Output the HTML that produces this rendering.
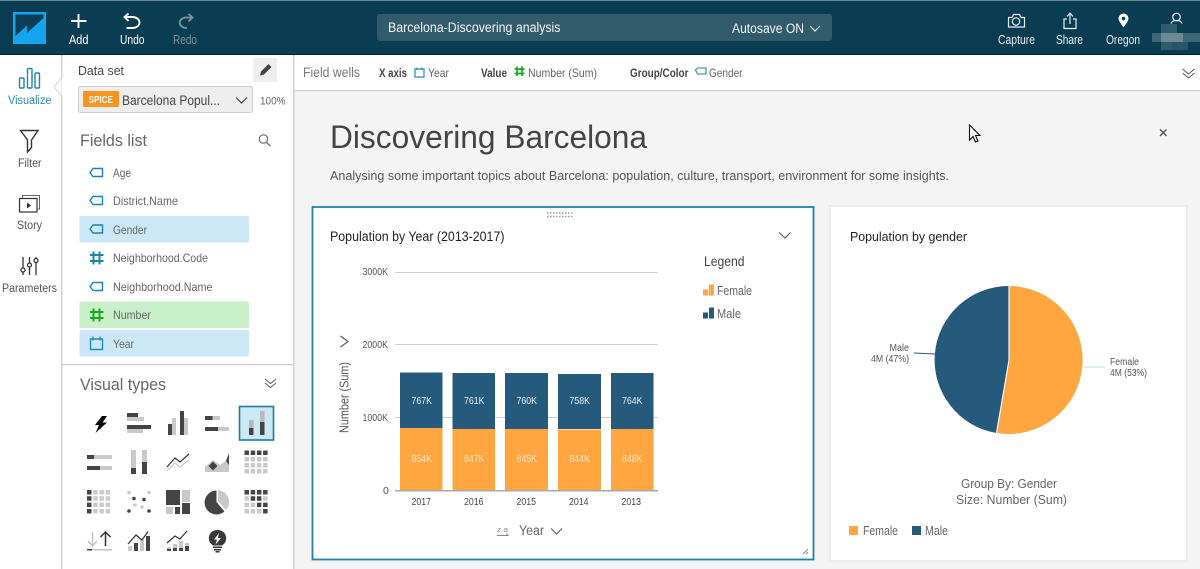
<!DOCTYPE html>
<html><head><meta charset="utf-8"><title>Barcelona-Discovering analysis</title>
<style>
html,body{margin:0;padding:0;width:1200px;height:569px;overflow:hidden;background:#f4f4f4}
svg{display:block;filter:blur(.3px)}
text{font-family:"Liberation Sans",sans-serif}
</style></head><body>
<svg width="1200" height="569" viewBox="0 0 1200 569" xmlns="http://www.w3.org/2000/svg">
<rect width="1200" height="569" fill="#f4f4f4"/>
<!-- top bar -->
<rect width="1200" height="54" fill="#0a3d51"/>
<rect width="1200" height="1" fill="#6d8a96"/>
<rect y="54" width="1200" height="1" fill="#04222e"/>
<rect x="13" y="12" width="33" height="32" fill="#15a5ee"/>
<rect x="15.500" y="14.500" width="28" height="27" fill="#0b3f57"/>
<path d="M15.500 36L27 25.500V33L43.500 18V41.500H15.500Z" fill="#15a5ee"/>
<g stroke="#fff" stroke-width="1.900" fill="none">
<path d="M78.500 14V28M71 21H86.500"/>
<path d="M128.500 13.500L124.500 17L128.500 21M125 17H132.500A7 5.500 0 0 1 132.500 28H126.500"/>
</g>
<path d="M188.500 14L192.500 17.500L188.500 21.500M192 17.500H185A7.500 5.500 0 0 0 185 28H187" stroke="#7e95a0" stroke-width="1.800" fill="none"/>
<g fill="#fff" font-size="12.500">
<text x="69" y="44" textLength="19.500" lengthAdjust="spacingAndGlyphs">Add</text>
<text x="120" y="44" textLength="24.500" lengthAdjust="spacingAndGlyphs">Undo</text>
<text x="998" y="44" textLength="37" lengthAdjust="spacingAndGlyphs" fill="#e6eef1">Capture</text>
<text x="1056" y="44" textLength="27" lengthAdjust="spacingAndGlyphs" fill="#e6eef1">Share</text>
<text x="1106" y="44" textLength="34" lengthAdjust="spacingAndGlyphs" fill="#e6eef1">Oregon</text>
</g>
<text x="173" y="44" font-size="12.500" fill="#7e95a0" textLength="24" lengthAdjust="spacingAndGlyphs">Redo</text>
<rect x="377" y="14" width="455" height="27" rx="3" fill="#315b6b"/>
<text x="388" y="32" font-size="13.500" fill="#f2f6f7" textLength="172.500" lengthAdjust="spacingAndGlyphs">Barcelona-Discovering analysis</text>
<text x="732" y="33" font-size="13.500" fill="#f2f6f7" textLength="72" lengthAdjust="spacingAndGlyphs">Autosave ON</text>
<path d="M810 26L815 31L820 26" stroke="#f2f6f7" stroke-width="1.100" fill="none"/>
<!-- top right icons -->
<g stroke="#e6eef1" stroke-width="1.200" fill="none">
<path d="M1008.500 17.500H1012L1013.500 14.500H1019.500L1021 17.500H1024.500V27H1008.500Z"/>
<circle cx="1016" cy="21.500" r="3.700"/>
<path d="M1067 19H1064V28.500H1076V19H1073M1070 24V13.500M1067 16.500L1070 13L1073 16.500"/>
<circle cx="1176.500" cy="17" r="3.800"/>
<path d="M1171 23.500C1172 20.800 1174 20.500 1176.500 20.500C1179 20.500 1181 20.800 1182 23.500"/>
</g>
<path d="M1123.500 27.500C1120.500 23 1118.500 20.500 1118.500 18.500A5 5 0 0 1 1128.500 18.500C1128.500 20.500 1126.500 23 1123.500 27.500Z" fill="#fff"/>
<circle cx="1123.500" cy="18.500" r="1.800" fill="#0a3d51"/>
<!-- blurred user -->
<rect x="1161" y="24" width="16" height="26" fill="#2f5b6c"/>
<rect x="1152" y="33" width="48" height="9" fill="#3c6676"/>
<rect x="1161" y="33" width="22" height="9" fill="#6a8a97"/>
<rect x="1172" y="42" width="16" height="8" fill="#2a5566"/>

<!-- left rail -->
<rect x="0" y="55" width="61" height="514" fill="#fff"/>
<rect x="61" y="55" width="1.500" height="514" fill="#d4d4d4"/>
<path d="M61.500 78L54 87L61.500 96" fill="#fff" stroke="#d4d4d4"/>
<rect x="62" y="78" width="2" height="18" fill="#fff"/>
<g fill="none" stroke="#1c88aa" stroke-width="1.400">
<rect x="19.500" y="78" width="4.500" height="10" rx="1"/>
<rect x="27.500" y="68.500" width="4.500" height="19.500" rx="1"/>
<rect x="35" y="73" width="4.500" height="15" rx="1"/>
</g>
<text x="8" y="104" font-size="11.500" fill="#2a8aa8" textLength="43.500" lengthAdjust="spacingAndGlyphs">Visualize</text>
<path d="M20.500 130.500H38L31.500 140V147.500L27.500 152V140Z" fill="none" stroke="#333" stroke-width="1.400"/>
<text x="18" y="167" font-size="11.500" fill="#555" textLength="23.500" lengthAdjust="spacingAndGlyphs">Filter</text>
<rect x="19.500" y="198.500" width="17.500" height="13.500" fill="#fff" stroke="#333" stroke-width="1.200"/>
<path d="M22.500 198V195.500H39.500V209H37" fill="none" stroke="#666" stroke-width="1"/>
<path d="M27 202.500L31 205.500L27 208.500Z" fill="#333"/>
<text x="17" y="229" font-size="11.500" fill="#555" textLength="25" lengthAdjust="spacingAndGlyphs">Story</text>
<g stroke="#333" stroke-width="1.300" fill="#fff">
<path d="M23 257V275M29.500 257V275M36 257V275" fill="none"/>
<circle cx="23" cy="270" r="2"/><circle cx="29.500" cy="265" r="2"/><circle cx="36" cy="260.500" r="2"/>
</g>
<text x="2" y="292" font-size="11.500" fill="#555" textLength="55" lengthAdjust="spacingAndGlyphs">Parameters</text>

<!-- panel -->
<rect x="62.500" y="55" width="231" height="514" fill="#fff"/>
<rect x="293" y="55" width="1.500" height="514" fill="#d4d4d4"/>
<text x="78" y="75" font-size="13" fill="#444" textLength="46" lengthAdjust="spacingAndGlyphs">Data set</text>
<rect x="253" y="58" width="24" height="24" fill="#eee"/>
<path d="M260 75.500L261 71.500L268.500 64L271.500 67L264 74.500Z" fill="#444"/>
<rect x="78.500" y="86.500" width="174" height="26" rx="2" fill="#eee" stroke="#ccc"/>
<rect x="83" y="91" width="36" height="16" rx="1.500" fill="#f7931e"/>
<text x="88.500" y="103" font-size="10.500" font-weight="bold" fill="#fff" textLength="24.500" lengthAdjust="spacingAndGlyphs">SPICE</text>
<text x="122" y="105" font-size="13.500" fill="#444" textLength="98" lengthAdjust="spacingAndGlyphs">Barcelona Popul...</text>
<path d="M236 97.500L241.500 103L247 97.500" stroke="#444" stroke-width="1.200" fill="none"/>
<text x="260" y="104.500" font-size="11" fill="#666" textLength="25.500" lengthAdjust="spacingAndGlyphs">100%</text>
<text x="80" y="146" font-size="16.500" fill="#666" textLength="67" lengthAdjust="spacingAndGlyphs">Fields list</text>
<circle cx="263.500" cy="139" r="4.200" fill="none" stroke="#666" stroke-width="1.100"/>
<path d="M266.500 142.500L270.500 146" stroke="#666" stroke-width="1.200"/>

<rect x="79.500" y="216" width="169.500" height="26.500" rx="1.500" fill="#cce8f6"/>
<rect x="79.500" y="301.500" width="169.500" height="26.500" rx="1.500" fill="#c9f0c9"/>
<rect x="79.500" y="330" width="169.500" height="26.500" rx="1.500" fill="#cce8f6"/>
<g fill="none" stroke="#1a86a8" stroke-width="1.400">
<path d="M90 172.500L93 168.500H102.500V176.500H93Z"/>
<path d="M90 200.500L93 196.500H102.500V204.500H93Z"/>
<path d="M90 229L93 225H102.500V233H93Z"/>
<path d="M90 286.500L93 282.500H102.500V290.500H93Z"/>
</g>
<path d="M93.500 251.500V264.500M99.500 251.500V264.500M90 255H103.500M90 261H103.500" stroke="#1a86a8" stroke-width="2" fill="none"/>
<path d="M93.500 308.500V321.500M99.500 308.500V321.500M90 312H103.500M90 318H103.500" stroke="#16a821" stroke-width="2" fill="none"/>
<path d="M90.500 339H102.500V349.500H90.500ZM93 336.500V340.500M100 336.500V340.500" stroke="#1a8ec4" stroke-width="1.400" fill="none"/>
<g font-size="12" fill="#666">
<text x="113" y="177" textLength="18" lengthAdjust="spacingAndGlyphs">Age</text>
<text x="113" y="205" textLength="65" lengthAdjust="spacingAndGlyphs">District.Name</text>
<text x="113" y="234" textLength="34" lengthAdjust="spacingAndGlyphs">Gender</text>
<text x="113" y="262" textLength="95" lengthAdjust="spacingAndGlyphs">Neighborhood.Code</text>
<text x="113" y="291" textLength="99.500" lengthAdjust="spacingAndGlyphs">Neighborhood.Name</text>
<text x="113" y="319" textLength="38" lengthAdjust="spacingAndGlyphs">Number</text>
<text x="113" y="348" textLength="21" lengthAdjust="spacingAndGlyphs">Year</text>
</g>
<rect x="62" y="364" width="231" height="1.200" fill="#ccc"/>
<text x="80" y="390" font-size="16.500" fill="#666" textLength="86" lengthAdjust="spacingAndGlyphs">Visual types</text>
<path d="M265 379L270.500 383.500L276 379M265 383L270.500 387.500L276 383" stroke="#666" stroke-width="1.100" fill="none"/>

<!-- visual type icons -->
<path d="M102 416L95 425H99L95.500 433L107 422.500H102.500L107 416Z" fill="#000"/>
<g fill="#444">
<rect x="127" y="413" width="11" height="4"/><rect x="127" y="425" width="24" height="4"/>
<rect x="168" y="424" width="4" height="11"/><rect x="180" y="411" width="4" height="24"/>
<rect x="205" y="416" width="7.500" height="4"/><rect x="205" y="427" width="13" height="4"/>
</g>
<g fill="#c9c9c9">
<rect x="127" y="417" width="17" height="4"/><rect x="127" y="429" width="16" height="4"/>
<rect x="172" y="418" width="4" height="17"/><rect x="184" y="418" width="4" height="17"/>
<rect x="212.500" y="416" width="7.500" height="4"/><rect x="218" y="427" width="11" height="4"/>
</g>
<rect x="239.500" y="406.500" width="34" height="33.500" fill="#cde8f5" stroke="#1b7c9e" stroke-width="1.600"/>
<rect x="249" y="420" width="4.500" height="15" fill="#b5b9bb"/><rect x="249" y="428" width="4.500" height="7" fill="#444"/>
<rect x="260" y="411" width="4.500" height="24" fill="#b5b9bb"/><rect x="260" y="422" width="4.500" height="13" fill="#444"/>
<!-- row 2 -->
<g fill="#c9c9c9">
<rect x="87" y="455" width="25" height="4"/><rect x="87" y="466" width="25" height="4"/>
<rect x="131" y="450" width="5" height="24"/><rect x="142" y="450" width="5" height="24"/>
<path d="M205 472V467L213 460L220 465L229 458V472Z"/>
</g>
<g fill="#444">
<rect x="87" y="455" width="7" height="4"/><rect x="87" y="466" width="13" height="4"/>
<rect x="131" y="468" width="5" height="6"/><rect x="142" y="462" width="5" height="12"/>
<path d="M213 461.500L217.500 466L213 470.500L208.500 466Z"/><path d="M226 461L229 453V465Z"/>
</g>
<path d="M167 467L175 458L180 462L189 454" stroke="#333" stroke-width="1.200" fill="none"/>
<path d="M167 471L175 463L180 467L189 460" stroke="#c9c9c9" stroke-width="1.200" fill="none"/>
<path d="M244.500 457h4.500v4.500h-4.500zM250.700 457h4.500v4.500h-4.500zM256.900 457h4.500v4.500h-4.500zM263.100 457h4.500v4.500h-4.500zM244.500 463h4.500v4.500h-4.500zM250.700 463h4.500v4.500h-4.500zM256.900 463h4.500v4.500h-4.500zM263.100 463h4.500v4.500h-4.500zM244.500 469h4.500v4.500h-4.500zM250.700 469h4.500v4.500h-4.500zM256.900 469h4.500v4.500h-4.500zM263.100 469h4.500v4.500h-4.500z" fill="#c9c9c9"/>
<path d="M244.500 450.500h4.500v4.500h-4.500zM250.700 450.500h4.500v4.500h-4.500zM256.900 450.500h4.500v4.500h-4.500zM263.100 450.500h4.500v4.500h-4.500z" fill="#444"/>
<!-- row 3 -->
<path d="M93.200 490h4.500v4.500h-4.500zM99.400 490h4.500v4.500h-4.500zM105.600 490h4.500v4.500h-4.500zM93.200 496.300h4.500v4.500h-4.500zM99.400 496.300h4.500v4.500h-4.500zM105.600 496.300h4.500v4.500h-4.500zM93.200 502.600h4.500v4.500h-4.500zM99.400 502.600h4.500v4.500h-4.500zM105.600 502.600h4.500v4.500h-4.500zM93.200 509h4.500v4.500h-4.500zM99.400 509h4.500v4.500h-4.500zM105.600 509h4.500v4.500h-4.500z" fill="#c9c9c9"/>
<path d="M87 490h4.500v4.500h-4.500zM87 496.300h4.500v4.500h-4.500zM87 502.600h4.500v4.500h-4.500zM87 509h4.500v4.500h-4.500z" fill="#444"/>
<g fill="#444"><circle cx="134" cy="498.500" r="1.800"/><circle cx="144" cy="499.500" r="1.800"/><circle cx="129" cy="511" r="1.800"/><circle cx="149" cy="511" r="1.800"/></g>
<g fill="#c9c9c9"><circle cx="129" cy="492.500" r="1.800"/><circle cx="149" cy="492.500" r="1.800"/><circle cx="135" cy="505" r="1.800"/><circle cx="142" cy="507" r="1.800"/></g>
<rect x="166" y="490" width="14" height="15" fill="#444"/><rect x="182" y="490" width="8" height="12" fill="#c9c9c9"/><rect x="166" y="507" width="7" height="7" fill="#c9c9c9"/><rect x="175" y="507" width="5" height="7" fill="#444"/><rect x="182" y="503" width="8" height="11" fill="#444"/>
<path d="M216.500 490.500V502L224.500 511.500A12 12 0 1 1 216.500 490.500Z" fill="#444"/>
<path d="M218 490A12 12 0 0 1 226 510L218 501Z" fill="#c9c9c9"/>
<path d="M244.500 496.300h4.500v4.500h-4.500zM263.100 496.300h4.500v4.500h-4.500zM244.500 502.600h4.500v4.500h-4.500zM250.700 502.600h4.500v4.500h-4.500zM244.500 509h4.500v4.500h-4.500zM250.700 509h4.500v4.500h-4.500zM256.900 509h4.500v4.500h-4.500z" fill="#c9c9c9"/>
<path d="M244.500 490h4.500v4.500h-4.500zM250.700 490h4.500v4.500h-4.500zM256.900 490h4.500v4.500h-4.500zM263.100 490h4.500v4.500h-4.500zM250.700 496.300h4.500v4.500h-4.500zM256.900 496.300h4.500v4.500h-4.500zM256.900 502.600h4.500v4.500h-4.500zM263.100 502.600h4.500v4.500h-4.500zM263.100 509h4.500v4.500h-4.500z" fill="#444"/>
<!-- row 4 -->
<path d="M92.500 532V546M88 541L92.500 546L97 541" stroke="#c4c4c4" stroke-width="1.500" fill="none"/>
<path d="M105.500 546V532M100.500 537L105.500 532L110.500 537" stroke="#333" stroke-width="1.500" fill="none"/>
<rect x="87" y="549" width="25" height="1.500" fill="#c4c4c4"/><rect x="87" y="549" width="5" height="1.500" fill="#444"/>
<rect x="128" y="546" width="4" height="5" fill="#c9c9c9"/><rect x="134" y="543" width="4" height="8" fill="#444"/><rect x="140" y="540" width="4" height="11" fill="#c9c9c9"/><rect x="146" y="536" width="4" height="15" fill="#444"/>
<path d="M128 544L136 535L142 540L148 531.500" stroke="#333" stroke-width="1.200" fill="none"/>
<rect x="167" y="547" width="4" height="4" fill="#c9c9c9"/><rect x="173" y="544" width="4" height="7" fill="#c9c9c9"/><rect x="179" y="541" width="4" height="10" fill="#c9c9c9"/><rect x="185" y="543" width="4" height="8" fill="#c9c9c9"/>
<rect x="167" y="549" width="4" height="2" fill="#444"/><rect x="173" y="548" width="4" height="3" fill="#444"/><rect x="179" y="548" width="4" height="3" fill="#444"/><rect x="185" y="546" width="4" height="5" fill="#444"/>
<path d="M167 543L175 536L180 539L187 531" stroke="#333" stroke-width="1.200" fill="none"/>
<path d="M217.500 530A8.300 8.300 0 0 1 222 545.500H213A8.300 8.300 0 0 1 217.500 530ZM213 546.500H222V548H213ZM214 549H221V550.500H214ZM215.500 551H219.500V552.500H215.500Z" fill="#3a3a3a"/>
<path d="M219 533L214 539.500H217L215.500 544.500L221 538H218Z" fill="#fff"/>

<!-- field wells -->
<rect x="294.500" y="55" width="905.500" height="35.500" fill="#fff"/>
<rect x="294.500" y="90" width="905.500" height="1.200" fill="#ccc"/>
<text x="303" y="77" font-size="13.500" fill="#777" textLength="57" lengthAdjust="spacingAndGlyphs">Field wells</text>
<g font-size="12" font-weight="bold" fill="#444">
<text x="379" y="77" textLength="28" lengthAdjust="spacingAndGlyphs">X axis</text>
<text x="481" y="77" textLength="26" lengthAdjust="spacingAndGlyphs">Value</text>
<text x="630" y="77" textLength="58.500" lengthAdjust="spacingAndGlyphs">Group/Color</text>
</g>
<g font-size="12" fill="#666">
<text x="428" y="77" textLength="21" lengthAdjust="spacingAndGlyphs">Year</text>
<text x="528" y="77" textLength="69" lengthAdjust="spacingAndGlyphs">Number (Sum)</text>
<text x="709" y="77" textLength="33.500" lengthAdjust="spacingAndGlyphs">Gender</text>
</g>
<path d="M415 69H424V77H415ZM417 67.500V70M422 67.500V70" stroke="#1a8ec4" stroke-width="1.200" fill="none"/>
<path d="M517 66.500V76M522 66.500V76M514.500 69H524.500M514.500 73.500H524.500" stroke="#16a821" stroke-width="1.700" fill="none"/>
<path d="M695.500 70L697.500 68H706V74H697.500Z" stroke="#1a86a8" stroke-width="1.100" fill="none"/>
<path d="M1182.500 69L1188.500 74L1194.500 69M1182.500 73L1188.500 78L1194.500 73" stroke="#555" stroke-width="1" fill="none"/>

<!-- header -->
<text x="330" y="148" font-size="32" fill="#444" textLength="317" lengthAdjust="spacingAndGlyphs">Discovering Barcelona</text>
<text x="330" y="180" font-size="13" fill="#555" textLength="619" lengthAdjust="spacingAndGlyphs">Analysing some important topics about Barcelona: population, culture, transport, environment for some insights.</text>
<path d="M1160 129.500L1166.500 136M1166.500 129.500L1160 136" stroke="#555" stroke-width="1.400"/>
<path d="M969.500 125V140L973 136.500L975.500 142L978 141L975.500 135.500L980 135.500Z" fill="#fff" stroke="#111" stroke-width="1.100"/>

<!-- card 1 -->
<rect x="312.500" y="207" width="501" height="352.500" fill="#fff" stroke="#1b84a8" stroke-width="1.800"/>
<path d="M547 213H574M547 216.500H574" stroke="#999" stroke-width="1.500" stroke-dasharray="1.500 1.500"/>
<text x="330" y="241" font-size="13.500" fill="#222" textLength="174.500" lengthAdjust="spacingAndGlyphs">Population by Year (2013-2017)</text>
<path d="M779 232.500L785 238L790.500 232.500" stroke="#555" stroke-width="1.100" fill="none"/>
<path d="M803 554L808 549M806 554L808 552" stroke="#888" stroke-width="1"/>
<text x="704" y="266" font-size="13.500" fill="#444" textLength="40.500" lengthAdjust="spacingAndGlyphs">Legend</text>
<rect x="703" y="289.500" width="5" height="6" fill="#ffa640"/><rect x="709" y="284.500" width="5" height="11" fill="#ffa640"/>
<rect x="703" y="312.500" width="5" height="6" fill="#255a7c"/><rect x="709" y="307.500" width="5" height="11" fill="#255a7c"/>
<text x="717" y="295" font-size="12.500" fill="#666" textLength="35" lengthAdjust="spacingAndGlyphs">Female</text>
<text x="717" y="318" font-size="12.500" fill="#666" textLength="24" lengthAdjust="spacingAndGlyphs">Male</text>
<g fill="#d0d0d0">
<rect x="395" y="272" width="263" height="1"/><rect x="395" y="344" width="263" height="1"/><rect x="395" y="417" width="263" height="1"/>
</g>
<rect x="395" y="490" width="263" height="1.500" fill="#aaa"/>
<g font-size="10.500" fill="#555">
<text x="362.500" y="275" textLength="25.500" lengthAdjust="spacingAndGlyphs">3000K</text><text x="362.500" y="348" textLength="25.500" lengthAdjust="spacingAndGlyphs">2000K</text><text x="362.500" y="421" textLength="25.500" lengthAdjust="spacingAndGlyphs">1000K</text><text x="383" y="494">0</text>
</g>
<g fill="#255a7c">
<rect x="400" y="372.500" width="42.500" height="55.500"/><rect x="452.500" y="373" width="42.500" height="56"/><rect x="505" y="373" width="43" height="56"/><rect x="558" y="374" width="43" height="55"/><rect x="611" y="373" width="42.500" height="56"/>
</g>
<g fill="#ffa640">
<rect x="400" y="428" width="42.500" height="62"/><rect x="452.500" y="429" width="42.500" height="61"/><rect x="505" y="429" width="43" height="61"/><rect x="558" y="429.500" width="43" height="60.500"/><rect x="611" y="429" width="42.500" height="61"/>
</g>
<g font-size="10.500" fill="#e8f0f4">
<text x="411.500" y="404" textLength="20.500" lengthAdjust="spacingAndGlyphs">767K</text><text x="464" y="404" textLength="20.500" lengthAdjust="spacingAndGlyphs">761K</text><text x="516.500" y="404" textLength="20.500" lengthAdjust="spacingAndGlyphs">760K</text><text x="569.500" y="404" textLength="20.500" lengthAdjust="spacingAndGlyphs">758K</text><text x="622" y="404" textLength="20.500" lengthAdjust="spacingAndGlyphs">764K</text>
</g>
<g font-size="10.500" fill="#ffe6c4">
<text x="411.500" y="462" textLength="20.500" lengthAdjust="spacingAndGlyphs">854K</text><text x="464" y="462" textLength="20.500" lengthAdjust="spacingAndGlyphs">847K</text><text x="516.500" y="462" textLength="20.500" lengthAdjust="spacingAndGlyphs">845K</text><text x="569.500" y="462" textLength="20.500" lengthAdjust="spacingAndGlyphs">844K</text><text x="622" y="462" textLength="20.500" lengthAdjust="spacingAndGlyphs">848K</text>
</g>
<g font-size="10.500" fill="#444">
<text x="411.500" y="505" textLength="19.500" lengthAdjust="spacingAndGlyphs">2017</text><text x="464" y="505" textLength="19.500" lengthAdjust="spacingAndGlyphs">2016</text><text x="516.500" y="505" textLength="19.500" lengthAdjust="spacingAndGlyphs">2015</text><text x="569" y="505" textLength="19.500" lengthAdjust="spacingAndGlyphs">2014</text><text x="621.500" y="505" textLength="19.500" lengthAdjust="spacingAndGlyphs">2013</text>
</g>
<text transform="translate(348.500 433) rotate(-90)" font-size="13" fill="#555" textLength="71" lengthAdjust="spacingAndGlyphs">Number (Sum)</text>
<path d="M340.500 336L348 341.500L340.500 347" stroke="#555" stroke-width="1.100" fill="none"/>
<text x="497" y="532" font-size="7" font-style="italic" fill="#888" textLength="11" lengthAdjust="spacingAndGlyphs">z a</text>
<path d="M497 535.500H508.500M506 533.500L508.500 535.500" stroke="#888" stroke-width="0.900" fill="none"/>
<text x="519" y="535" font-size="13.500" fill="#666" textLength="25" lengthAdjust="spacingAndGlyphs">Year</text>
<path d="M551 528.500L556.500 534L562 528.500" stroke="#555" stroke-width="1.100" fill="none"/>

<!-- card 2 -->
<rect x="829" y="205" width="359" height="357" fill="#e8e8e8" opacity=".6"/>
<rect x="831" y="207" width="355" height="353" fill="#fff"/>
<text x="850" y="241" font-size="13" fill="#222" textLength="117" lengthAdjust="spacingAndGlyphs">Population by gender</text>
<path d="M1009 360L1009 286A74 74 0 1 1 996.500 433Z" fill="#ffa640"/>
<path d="M1009 360L996.500 433A74 74 0 0 1 1009 286Z" fill="#255a7c"/>
<path d="M1009 286V360L996.500 433" stroke="#fff" stroke-width="1.100" fill="none"/>
<path d="M914 353L935 354" stroke="#255a7c" stroke-width="1.100"/>
<path d="M1084 367H1105" stroke="#b5dde8" stroke-width="1.100"/>
<g font-size="10" fill="#555">
<text x="889.500" y="351" textLength="19.500" lengthAdjust="spacingAndGlyphs">Male</text>
<text x="871" y="362" textLength="38" lengthAdjust="spacingAndGlyphs">4M (47%)</text>
<text x="1110" y="365" textLength="29" lengthAdjust="spacingAndGlyphs">Female</text>
<text x="1110" y="376" textLength="37" lengthAdjust="spacingAndGlyphs">4M (53%)</text>
</g>
<text x="961" y="488" font-size="13" fill="#666" textLength="96" lengthAdjust="spacingAndGlyphs">Group By: Gender</text>
<text x="956" y="504" font-size="13" fill="#666" textLength="111" lengthAdjust="spacingAndGlyphs">Size: Number (Sum)</text>
<rect x="849" y="526" width="9" height="9" fill="#ffa640"/><rect x="912" y="526" width="9" height="9" fill="#255a7c"/>
<text x="863" y="535" font-size="12.500" fill="#666" textLength="35" lengthAdjust="spacingAndGlyphs">Female</text>
<text x="925" y="535" font-size="12.500" fill="#666" textLength="23" lengthAdjust="spacingAndGlyphs">Male</text>
</svg>
</body></html>
